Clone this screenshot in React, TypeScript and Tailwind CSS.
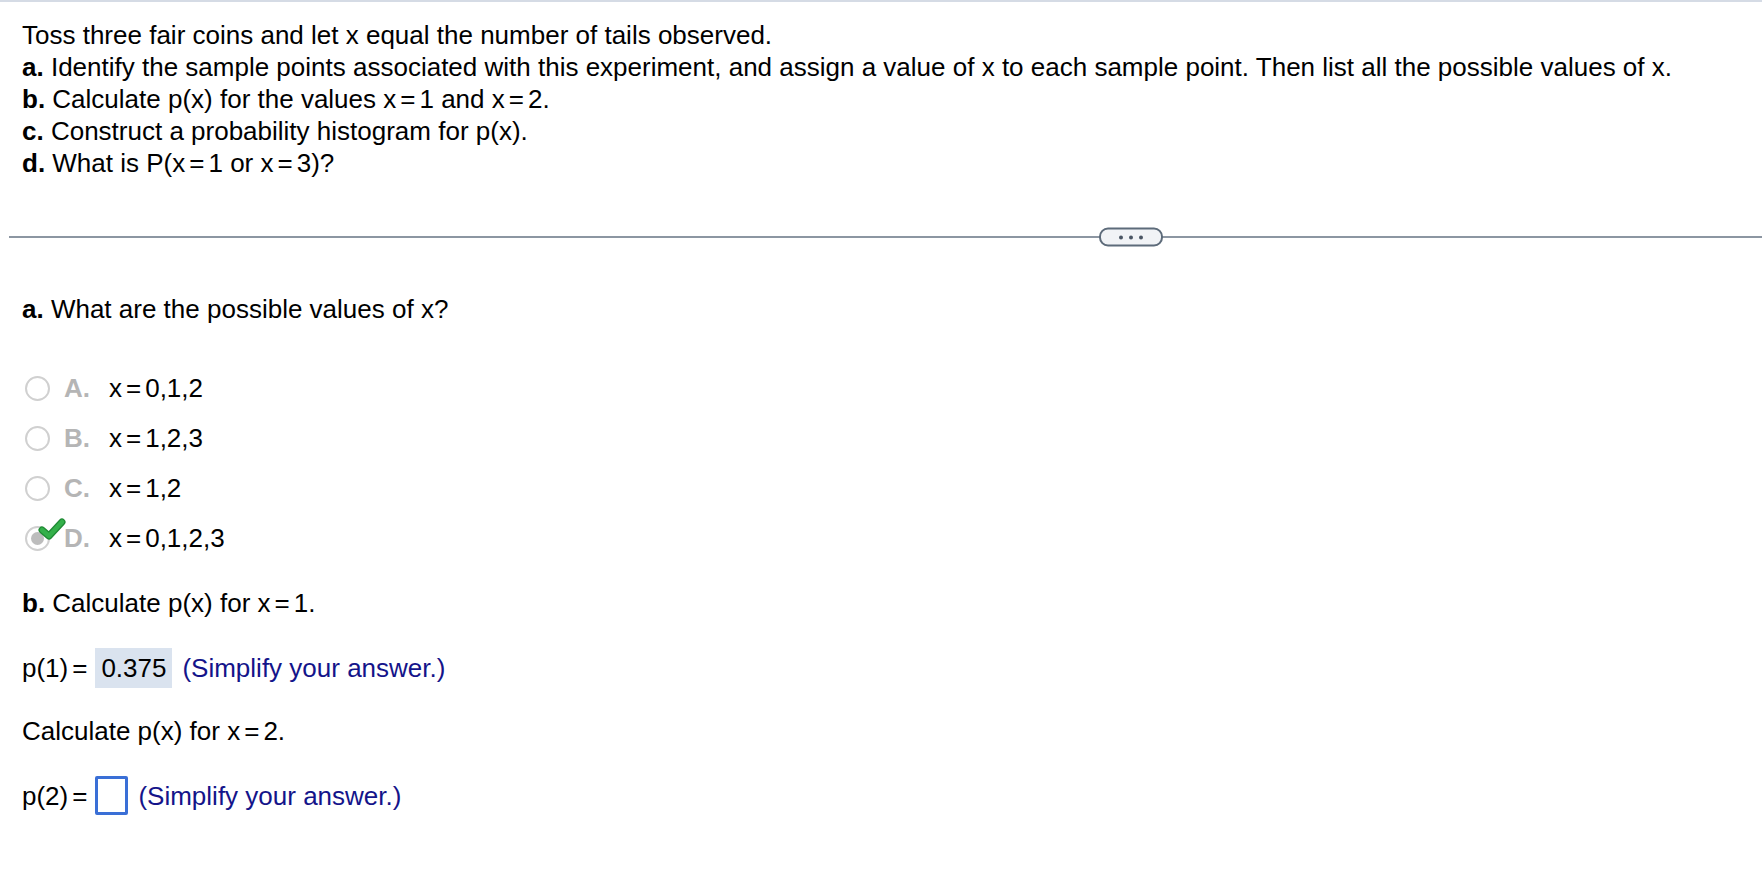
import React from "react";

function Eq({ l, r }: { l: string; r: string }) {
  return (
    <span>
      {l}
      <span className="mx-[4px]">=</span>
      {r}
    </span>
  );
}

function Radio({ selected }: { selected?: boolean }) {
  return (
    <span className="relative ml-[3px] inline-flex h-[25px] w-[25px] shrink-0 items-center justify-center rounded-full border-2 border-[#d0d0d0] bg-white">
      {selected && <span className="h-[13px] w-[13px] rounded-full bg-[#bdbdbd]" />}
      {selected && (
        <svg
          className="absolute left-[11px] top-[-10px]"
          width="28"
          height="24"
          viewBox="0 0 28 24"
        >
          <path
            d="M4 12 L11 18 L24 4"
            fill="none"
            stroke="#1f8a34"
            strokeWidth="7"
            strokeLinecap="round"
            strokeLinejoin="round"
          />
          <path
            d="M4 12 L11 18 L24 4"
            fill="none"
            stroke="#34b04a"
            strokeWidth="4.5"
            strokeLinecap="round"
            strokeLinejoin="round"
          />
        </svg>
      )}
    </span>
  );
}

function Option({ letter, value, selected }: { letter: string; value: string; selected?: boolean }) {
  return (
    <div className="flex h-[50px] items-center">
      <Radio selected={selected} />
      <span className="ml-[14px] w-[45px] font-bold text-[#b5b5b5]">{letter}.</span>
      <Eq l="x" r={value} />
    </div>
  );
}

export default function App() {
  return (
    <div className="min-h-screen border-t-2 border-[#d5dbe5] bg-white font-['Liberation_Sans',Arial,sans-serif] text-[26px] leading-[32px] text-black">
      <div className="pl-[22px] pt-[17px]">
        <div>Toss three fair coins and let x equal the number of tails observed.</div>
        <div>
          <b>a.</b> Identify the sample points associated with this experiment, and assign a value of x to each sample point. Then list all the possible values of x.
        </div>
        <div>
          <b>b.</b> Calculate p(x) for the values <Eq l="x" r="1" /> and <Eq l="x" r="2." />
        </div>
        <div>
          <b>c.</b> Construct a probability histogram for p(x).
        </div>
        <div>
          <b>d.</b> What is P(<Eq l="x" r="1" /> or <Eq l="x" r="3" />)?
        </div>
      </div>

      <div className="relative ml-[9px] mt-[57px] h-[2px] bg-[#8c96a2]">
        <div className="absolute left-[1090px] top-1/2 flex h-[19px] w-[64px] -translate-y-1/2 items-center justify-center gap-[6px] rounded-[9px] border-2 border-[#5d6b7a] bg-[#f1f3f6]">
          <span className="h-[4px] w-[4px] rounded-full bg-[#4a5563]" />
          <span className="h-[4px] w-[4px] rounded-full bg-[#4a5563]" />
          <span className="h-[4px] w-[4px] rounded-full bg-[#4a5563]" />
        </div>
      </div>

      <div className="pl-[22px]">
        <div className="mt-[55px]">
          <b>a.</b> What are the possible values of x?
        </div>

        <div className="mt-[38px] flex flex-col">
          <Option letter="A" value="0,1,2" />
          <Option letter="B" value="1,2,3" />
          <Option letter="C" value="1,2" />
          <Option letter="D" value="0,1,2,3" selected />
        </div>

        <div className="mt-[24px]">
          <b>b.</b> Calculate p(x) for <Eq l="x" r="1." />
        </div>

        <div className="mt-[29px] flex h-[40px] items-center">
          <span>
            p(1)<span className="ml-[4px]">=</span>
          </span>
          <span className="ml-[8px] flex h-[40px] w-[77px] items-center justify-center bg-[#dae3ef]">0.375</span>
          <span className="ml-[10px] text-[#14148a]">(Simplify your answer.)</span>
        </div>

        <div className="mt-[27px]">
          Calculate p(x) for <Eq l="x" r="2." />
        </div>

        <div className="mt-[29px] flex h-[39px] items-center">
          <span>
            p(2)<span className="ml-[4px]">=</span>
          </span>
          <span className="ml-[8px] h-[39px] w-[33px] rounded-[2px] border-[3px] border-[#3a6fd6] bg-white" />
          <span className="ml-[10px] text-[#14148a]">(Simplify your answer.)</span>
        </div>
      </div>
    </div>
  );
}
